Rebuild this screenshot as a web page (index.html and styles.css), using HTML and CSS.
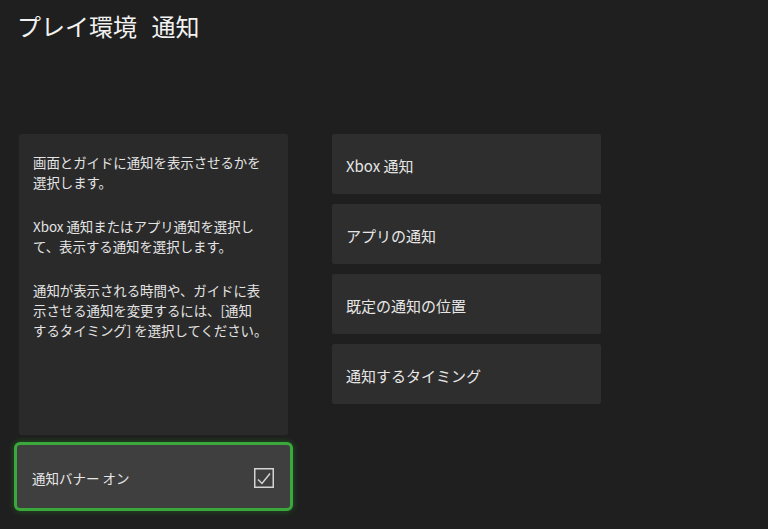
FILE: index.html
```html
<!DOCTYPE html>
<html lang="ja">
<head>
<meta charset="utf-8">
<link rel="stylesheet" href="styles.css">
</head>
<body>
<div class="page">
  <h1 class="title">プレイ環境 通知</h1>
  <div class="main">
    <div class="left">
      <div class="info">
        <p>画面とガイドに通知を表示させるかを<br>選択します。</p>
        <p>Xbox 通知またはアプリ通知を選択し<br>て、表示する通知を選択します。</p>
        <p>通知が表示される時間や、ガイドに表<br>示させる通知を変更するには、[通知<br>するタイミング] を選択してください。</p>
      </div>
      <div class="toggle">
        <span class="toggle-label">通知バナー オン</span>
        <span class="check">
          <svg width="20" height="20" viewBox="0 0 20 20">
            <rect x="0.75" y="0.75" width="18.5" height="18.5" fill="none" stroke="#d4d4d4" stroke-width="1.5"/>
            <path d="M4 11.5 L8 15.5 L16 5.5" fill="none" stroke="#d4d4d4" stroke-width="1.5"/>
          </svg>
        </span>
      </div>
    </div>
    <div class="right">
      <div class="tile">Xbox 通知</div>
      <div class="tile">アプリの通知</div>
      <div class="tile">既定の通知の位置</div>
      <div class="tile">通知するタイミング</div>
    </div>
  </div>
</div>
</body>
</html>
```

FILE: styles.css
```css
html, body {
  margin: 0;
  padding: 0;
  background: #1f1f1f;
  height: 100%;
  overflow: hidden;
}
body {
  font-family: "Noto Sans CJK JP", "Noto Sans", sans-serif;
  color: #e6e6e6;
}
.page {
  width: 768px;
  height: 529px;
}
.title {
  margin: 0;
  padding: 8px 0 0 17px;
  height: 40px;
  font-size: 24px;
  font-weight: 400;
  line-height: 36px;
  color: #f2f2f2;
  word-spacing: 9px;
}
.main {
  display: flex;
  gap: 44px;
  padding: 86px 0 0 19px;
}
.left {
  width: 269px;
  display: flex;
  flex-direction: column;
}
.info {
  height: 301px;
  background: #2a2a2a;
  border-radius: 2px;
  box-sizing: border-box;
  padding: 18px 10px 0 14px;
}
.info p {
  margin: 0 0 24px 0;
  font-size: 13.4px;
  line-height: 20px;
  color: #e4e4e4;
  white-space: nowrap;
}
.toggle {
  margin: 7px 0 0 -5px;
  width: 279px;
  height: 69px;
  box-sizing: border-box;
  border: 3px solid #3aa83a;
  border-radius: 6px;
  background: #3f3f3f;
  box-shadow: 0 0 6px rgba(40, 160, 40, 0.45);
  display: flex;
  align-items: center;
  justify-content: space-between;
  padding: 0 16px 0 15px;
}
.toggle-label {
  font-size: 13.5px;
  color: #e6e6e6;
  margin-top: 2px;
}
.check {
  display: flex;
  width: 20px;
  height: 20px;
  margin-top: 3px;
}
.right {
  width: 269px;
  display: flex;
  flex-direction: column;
  gap: 10px;
}
.tile {
  height: 60px;
  background: #2e2e2e;
  border-radius: 2px;
  display: flex;
  align-items: center;
  padding-left: 14px;
  font-size: 15px;
  color: #e6e6e6;
  box-sizing: border-box;
  padding-top: 3px;
}
```
